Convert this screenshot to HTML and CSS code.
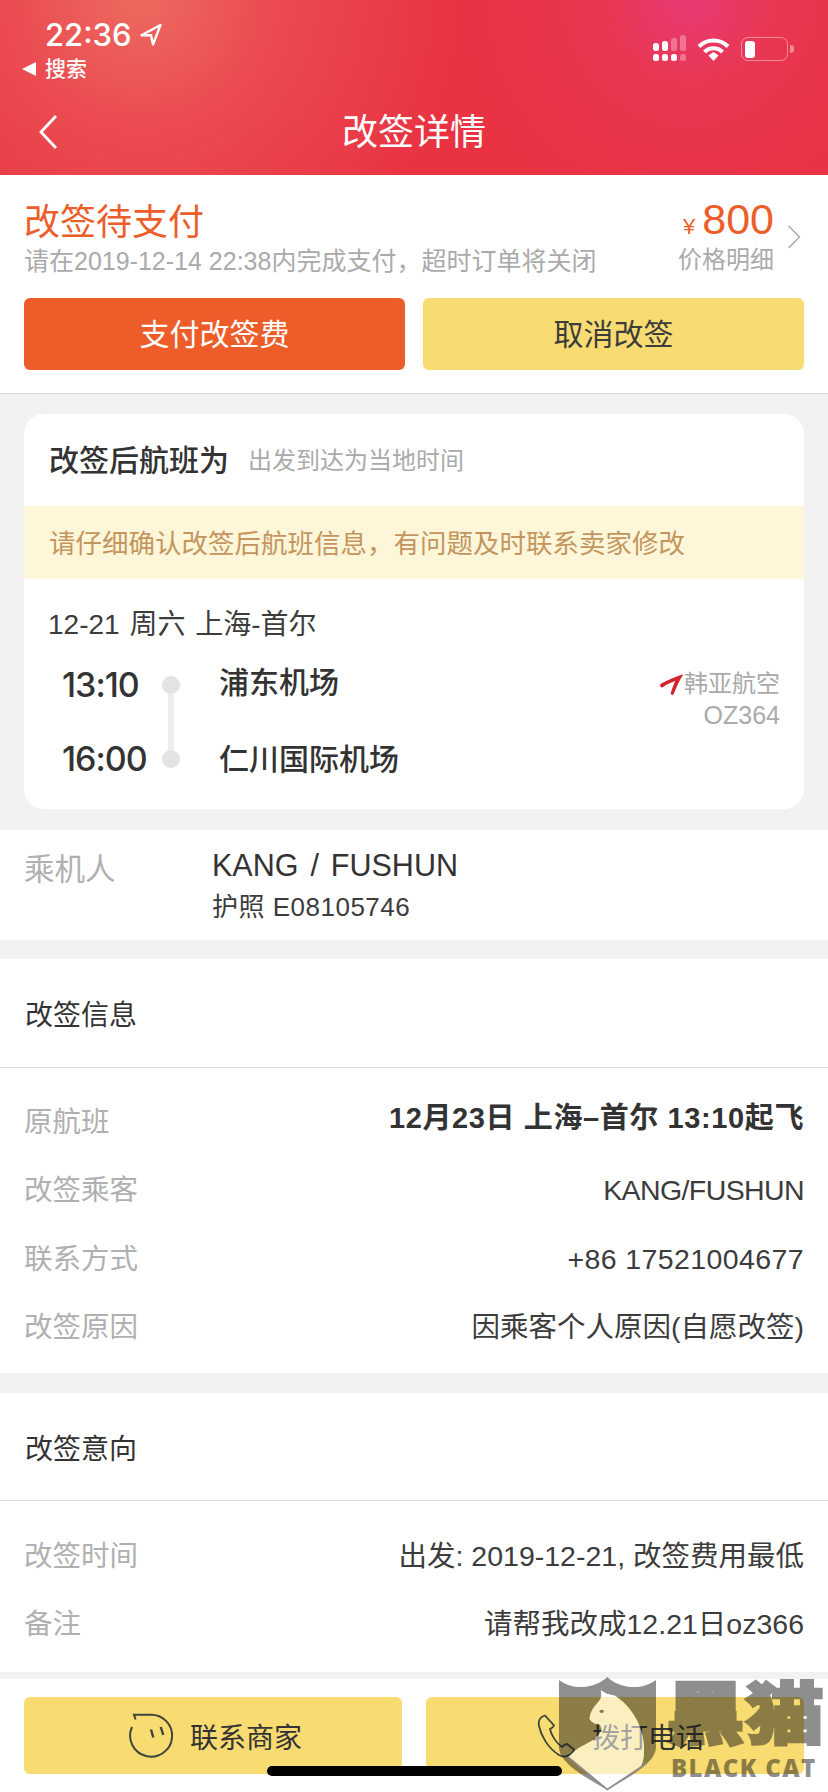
FILE: index.html
```html
<!DOCTYPE html>
<html lang="zh-CN">
<head>
<meta charset="utf-8">
<title>改签详情</title>
<link rel="stylesheet" href="styles.css">
</head>
<body>
<div class="page">
  <header class="header">
    <div class="status">
      <div class="status-left">
        <div class="clock"><span>22:36</span>
          <svg class="loc" viewBox="0 0 22 22"><path d="M20.500 1 1.500 11.300h9.500L13 20.500z" fill="none" stroke="#fff" stroke-width="2.400" stroke-linejoin="round"/></svg>
        </div>
        <div class="backapp"><i class="tri"></i><span>搜索</span></div>
      </div>
      <div class="status-right">
        <svg class="signal" viewBox="0 0 33 26"><g fill="#fff"><rect x="0" y="8" width="6" height="8" rx="2.500"/><rect x="0" y="19" width="6" height="7" rx="2.500"/><rect x="9" y="6" width="6" height="10" rx="2.500"/><rect x="9" y="19" width="6" height="7" rx="2.500"/><rect x="18" y="19" width="6" height="7" rx="2.500"/></g><g fill="#fff" opacity=".3"><rect x="18" y="3" width="6" height="13" rx="2.500"/><rect x="27" y="0" width="6" height="16" rx="2.500"/><rect x="27" y="19" width="6" height="7" rx="2.500"/></g></svg>
        <svg class="wifi" viewBox="0 0 33 24"><path d="M2 9.500C10 1.500 23 1.500 31 9.500M7.500 15C12.500 10 20.500 10 25.500 15" fill="none" stroke="#fff" stroke-width="4.200"/><path d="M11.500 18.500 16.500 15 21.500 18.500 16.500 24z" fill="#fff"/></svg>
        <div class="battery"><i class="level"></i></div><i class="nub"></i>
      </div>
    </div>
    <div class="navbar">
      <svg class="back" viewBox="0 0 20 36"><path d="M18 2 3 18l15 16" fill="none" stroke="#fff" stroke-width="2.800"/></svg>
      <h1 class="nav-title">改签详情</h1>
    </div>
  </header>

  <section class="summary">
    <div class="summary-top">
      <div class="summary-text">
        <div class="state">改签待支付</div>
        <div class="deadline">请在2019-12-14 22:38内完成支付，超时订单将关闭</div>
      </div>
      <div class="price">
        <div class="amount"><small>¥</small>800</div>
        <div class="price-link">价格明细</div>
      </div>
      <svg class="price-arrow" viewBox="0 0 14 24"><path d="M1.500 1 12.500 12 1.500 23" fill="none" stroke="#aaa" stroke-width="1.500"/></svg>
    </div>
    <div class="actions">
      <div class="btn btn-pay">支付改签费</div>
      <div class="btn btn-yellow">取消改签</div>
    </div>
  </section>

  <section class="wrap">
    <div class="card">
      <div class="card-head"><strong>改签后航班为</strong><span>出发到达为当地时间</span></div>
      <div class="notice">请仔细确认改签后航班信息，有问题及时联系卖家修改</div>
      <div class="flight">
        <div class="flight-date">12-21 周六 上海-首尔</div>
        <div class="flight-body">
          <div class="times"><span>13:10</span><span>16:00</span></div>
          <div class="track"><i></i><b></b><i></i></div>
          <div class="ports"><span>浦东机场</span><span>仁川国际机场</span></div>
          <div class="airline">
            <div class="airline-name"><svg class="logo" viewBox="0 0 25 22"><path d="M1.500 11C8 7.500 16 3.500 24.500 1.200 21 6 17.500 14 14.500 21.500c-1 .8-3 .4-2.800-1.200 1-4 3-8.500 4.500-12.300C12 9.300 7 12 3.500 14.500 1.500 15 .500 12.500 1.500 11z" fill="#d2262a"/></svg>韩亚航空</div>
            <div class="flight-no">OZ364</div>
          </div>
        </div>
      </div>
    </div>
  </section>

  <section class="passenger">
    <div class="pax-label">乘机人</div>
    <div>
      <div class="pax-name">KANG / FUSHUN</div>
      <div class="pax-id">护照 E08105746</div>
    </div>
  </section>

  <section class="panel info">
    <div class="panel-title">改签信息</div>
    <div class="rows">
      <div class="row"><span class="k">原航班</span><span class="v strong">12月23日 上海–首尔 13:10起飞</span></div>
      <div class="row"><span class="k">改签乘客</span><span class="v tight">KANG/FUSHUN</span></div>
      <div class="row"><span class="k">联系方式</span><span class="v num">+86 17521004677</span></div>
      <div class="row"><span class="k">改签原因</span><span class="v">因乘客个人原因(自愿改签)</span></div>
    </div>
  </section>

  <section class="panel intent">
    <div class="panel-title">改签意向</div>
    <div class="rows">
      <div class="row"><span class="k">改签时间</span><span class="v">出发: 2019-12-21, 改签费用最低</span></div>
      <div class="row"><span class="k">备注</span><span class="v">请帮我改成12.21日oz366</span></div>
    </div>
  </section>

  <footer class="footer">
    <div class="btn btn-yellow btn-foot btn-contact">
      <svg class="foot-icon" viewBox="0 0 44 46"><path d="M6.500 6.500 5 1.800H20A21 21 0 1 1 3 14" fill="none" stroke="#3c463c" stroke-width="2"/><path d="M22 16.500l2.300 8M31.700 14l2.600 8" fill="none" stroke="#3c463c" stroke-width="2.400"/></svg>
      <span>联系商家</span>
    </div>
    <div class="btn btn-yellow btn-foot btn-call">
      <svg class="foot-icon phone" viewBox="0 0 40 44"><path d="M8 1.500C3 3 1 7 2 12c2 10 9 22 20 29 4 2.500 8 2 12-1 2-1.500 3-3 3-4.500l-7-5.500c-2 0-3.500 1.500-5 3-5-3-11-12-12-18 2-1 3.500-2 4-3.500z" fill="none" stroke="#3c463c" stroke-width="1.800"/></svg>
      <span>拨打电话</span>
    </div>
  </footer>

  <div class="home-bar"></div>

  <div class="watermark">
    <svg class="shield" viewBox="0 0 97 114">
      <path fill-rule="evenodd" fill="#1a1a1a" fill-opacity=".49" d="M0 3C8 9 17 10.500 24 10 33 9.500 42 6 48.300 0 54.600 6 63.600 9.500 72.600 10 79.600 10.500 89 9 97 3V70C97 86 70 100 48.300 113 26 100 0 86 0 70ZM41.700 13.300 47.700 16.700 56 18.700C72 29 86 50 85 74.300 85 82 83.500 87 81 91L48.300 111.700 9.300 80C14 75 18 72 22.700 69.300 27 67 31 65 34.300 62.700 38 60 41 56.500 42.700 52.700L41 47.700C37 47.500 33 45.500 31 42.700 30.500 41 30.500 40 31 39.300 31.500 36 33 33.500 34.300 31 36.500 28 39 25.500 41 22.700 42.500 20 42.500 17 41.700 13.300Z"/>
      <path fill="#fff" fill-opacity=".55" d="M41.700 13.300 47.700 16.700 56 18.700C72 29 86 50 85 74.300 85 82 83.500 87 81 91L48.300 111.700 9.300 80C14 75 18 72 22.700 69.300 27 67 31 65 34.300 62.700 38 60 41 56.500 42.700 52.700L41 47.700C37 47.500 33 45.500 31 42.700 30.500 41 30.500 40 31 39.300 31.500 36 33 33.500 34.300 31 36.500 28 39 25.500 41 22.700 42.500 20 42.500 17 41.700 13.300Z"/>
      <path fill="none" stroke="#8f8d8e" stroke-width="1.600" d="M9.300 80 48.300 112.500 88 86"/>
      <ellipse cx="42.700" cy="34.300" rx="2.300" ry="1.600" fill="#8a7a45"/>
    </svg>
    <div class="wm-text">
      <div class="wm-cn">黑猫</div>
      <div class="wm-en">BLACK CAT</div>
    </div>
  </div>
</div>
</body>
</html>
```

FILE: styles.css
```css
* { box-sizing: border-box; }
html, body { margin: 0; padding: 0; }
body {
  width: 828px;
  height: 1792px;
  overflow: hidden;
  background: #f2f2f2;
  font-family: "Liberation Sans", "Noto Sans CJK SC", sans-serif;
  color: #333;
}
.page { position: relative; width: 828px; height: 1792px; overflow: hidden; }

/* header */
.header {
  height: 175px;
  padding-top: 22px;
  background:
    radial-gradient(circle at 140px -5px, rgba(238,118,102,.82) 0, rgba(236,100,95,.5) 130px, rgba(233,51,68,0) 320px),
    radial-gradient(circle at 690px 0, rgba(232,60,125,.85) 0, rgba(232,60,105,.35) 90px, rgba(233,51,68,0) 230px),
    #e93343;
  color: #fff;
}
.status { display: flex; justify-content: space-between; height: 58px; }
.status-left { padding-left: 22px; }
.clock { display: flex; align-items: center; padding-left: 23px; height: 26px; gap: 8px; font-family: Inter, sans-serif; font-size: 31px; font-weight: 500; line-height: 26px; }
.loc { width: 22px; height: 22px; }
.backapp { display: flex; align-items: center; gap: 9px; margin-top: 9px; font-size: 21px; line-height: 24px; font-weight: 500; }
.tri { width: 0; height: 0; border-style: solid; border-width: 7px 14px 7px 0; border-color: transparent #fff transparent transparent; }
.status-right { display: flex; align-items: flex-start; padding: 13px 34px 0 0; }
.signal { width: 33px; height: 26px; }
.wifi { width: 33px; height: 24px; margin: 2px 0 0 11px; }
.battery { width: 47px; height: 24px; margin: 2px 0 0 11px; padding: 2.500px; border: 1.500px solid rgba(255,255,255,.42); border-radius: 7px; }
.level { display: block; width: 10px; height: 100%; background: #fff; border-radius: 3px; }
.nub { width: 4px; height: 8px; margin-top: 10px; margin-left: 2px; background: rgba(255,255,255,.42); border-radius: 0 3px 3px 0; }
.navbar { position: relative; display: flex; justify-content: center; align-items: center; height: 40px; margin-top: 33px; }
.back { position: absolute; left: 38px; top: 1px; width: 20px; height: 36px; }
.nav-title { margin: 0; font-size: 36px; font-weight: 400; line-height: 40px; }

/* summary */
.summary { height: 219px; padding: 28px 24px 0; background: #fff; border-bottom: 1px solid #d8d8d8; }
.summary-top { display: flex; align-items: flex-start; height: 95px; }
.summary-text { flex: 1; }
.state { font-size: 36px; line-height: 40px; color: #ec5d2a; }
.deadline { margin-top: 2px; font-size: 25px; line-height: 32px; color: #aaa; white-space: nowrap; }
.price { width: 116px; margin-top: -6px; text-align: right; }
.amount { font-size: 43px; line-height: 44px; color: #ec5d2a; white-space: nowrap; }
.amount small { margin-right: 7px; font-size: 22px; }
.price-link { margin-top: -4px; font-size: 24px; line-height: 30px; color: #aaa; }
.price-arrow { width: 14px; height: 24px; margin: 22px 3px 0 13px; flex: none; }
.actions { display: flex; gap: 18px; }
.actions .btn { padding-bottom: 4px; }
.btn { display: flex; align-items: center; justify-content: center; flex: 1; height: 72px; border-radius: 6px; font-size: 30px; }
.btn-pay { background: #ec5d2a; color: #fff; }
.btn-yellow { background: #f9dc71; color: #3c3c3c; }

/* flight card */
.wrap { padding: 20px 24px 21px; }
.card { height: 395px; background: #fff; border-radius: 20px; overflow: hidden; }
.card-head { display: flex; align-items: center; gap: 19px; height: 92px; padding: 0 0 4px 25px; }
.card-head strong { font-size: 30px; font-weight: 500; color: #333; }
.card-head span { font-size: 24px; color: #aaa; }
.notice { height: 73px; padding-left: 25px; background: #fdf6d9; color: #c4955e; font-size: 26.500px; line-height: 77px; white-space: nowrap; overflow: hidden; }
.flight { padding: 28px 24px 0; }
.flight-date { font-size: 28px; line-height: 36px; word-spacing: 2px; color: #3c3c3c; }
.flight-body { display: flex; margin-top: 20px; height: 117px; }
.times { display: flex; flex-direction: column; justify-content: space-between; flex: none; width: 114px; padding-left: 14px; padding-top: 2px; font-family: Inter, sans-serif; font-size: 34px; font-weight: 500; line-height: 40px; letter-spacing: -1px; color: #333; height: 116px; }
.track { display: flex; flex-direction: column; align-items: center; flex: none; width: 18px; margin-top: 13px; height: 92px; }
.track i { display: block; flex: none; width: 18px; height: 18px; border-radius: 50%; background: #e3e3e3; }
.track b { display: block; flex: 1; width: 6px; background: #eee; }
.ports { display: flex; flex-direction: column; justify-content: space-between; flex: none; width: 300px; margin-left: 39px; font-size: 30px; font-weight: 500; line-height: 40px; color: #333; height: 117px; }
.airline { flex: 1; text-align: right; color: #aaa; font-size: 24px; }
.airline-name { display: flex; align-items: center; justify-content: flex-end; line-height: 32px; margin-top: 5px; }
.logo { width: 25px; height: 22px; }
.flight-no { margin-top: -1px; font-size: 25px; line-height: 32px; }

/* passenger */
.passenger { display: flex; height: 110px; padding: 15px 24px 0; background: #fff; }
.pax-label { width: 188px; font-size: 30.500px; line-height: 48px; color: #b0b0b0; }
.pax-name { font-size: 30.500px; line-height: 40px; word-spacing: 3.500px; color: #333; }
.pax-id { margin-top: 4px; font-size: 26px; line-height: 36px; letter-spacing: .5px; color: #3c3c3c; }

/* panels */
.panel { background: #fff; margin-top: 19px; }
.info { height: 414px; }
.intent { height: 279px; margin-top: 20px; }
.panel-title { height: 109px; padding-left: 25px; border-bottom: 1px solid #d8d8d8; font-size: 28px; line-height: 113px; color: #333; }
.intent .panel-title { height: 108px; line-height: 114px; }
.rows { display: flex; flex-direction: column; padding: 34px 24px 0; gap: 28.300px; }
.intent .rows { padding-top: 35px; }
.row { display: flex; justify-content: space-between; height: 40px; font-size: 28.500px; line-height: 40px; }
.k { color: #b0b0b0; }
.v { color: #3c3c3c; white-space: nowrap; }
.strong { margin-top: -4px; font-size: 29px; font-weight: 600; letter-spacing: .6px; color: #333; }
.tight { letter-spacing: -.6px; }
.num { letter-spacing: .4px; }

/* footer */
.footer { display: grid; grid-template-columns: 1fr 1fr; gap: 24px; height: 113px; margin-top: 7px; padding: 18px 24px 0; background: #fff; }
.btn-foot { height: 77px; gap: 17px; font-size: 28px; color: #333; }
.btn-contact { padding-left: 5px; }
.btn-call { gap: 15px; padding-left: 11px; }
.foot-icon { width: 44px; height: 46px; flex: none; }
.phone { width: 40px; height: 44px; }
.home-bar { position: absolute; left: 267px; top: 1766px; width: 295px; height: 10px; background: #000; border-radius: 5px; }

/* watermark */
.watermark { position: absolute; left: 559px; top: 1677px; display: flex; gap: 13px; }
.shield { width: 97px; height: 114px; flex: none; }
.wm-text { width: 156px; color: #1a1a1a; opacity: .49; white-space: nowrap; }
.wm-cn { width: 158px; height: 68px; margin: 9px 0 0 -3px; font-size: 79px; font-weight: 900; line-height: 70px; -webkit-text-stroke: 3px #1a1a1a; transform: scaleY(.86); transform-origin: top; }
.wm-en { margin: 4px 0 0 2px; font-family: "Open Sans", sans-serif; font-size: 24px; font-weight: 800; line-height: 20px; letter-spacing: 1.400px; }
```
